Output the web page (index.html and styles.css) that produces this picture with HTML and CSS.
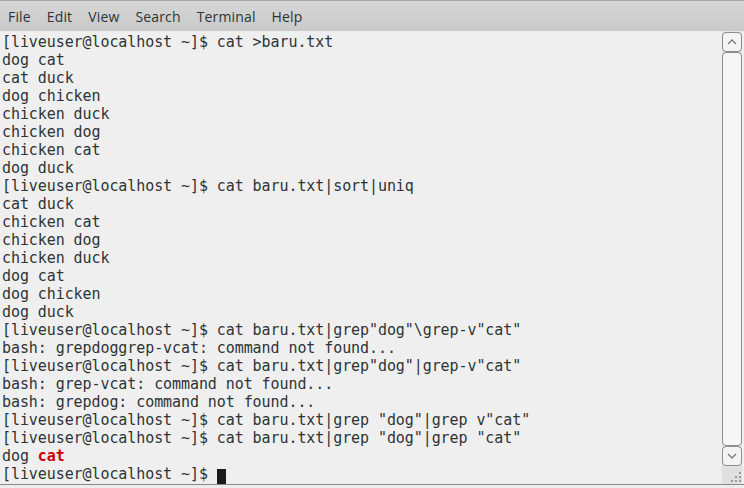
FILE: index.html
```html
<!DOCTYPE html>
<html>
<head>
<meta charset="utf-8">
<link rel="stylesheet" href="styles.css">
</head>
<body>
<div class="window">
  <div class="menubar">
    <span class="menu">File</span>
    <span class="menu">Edit</span>
    <span class="menu">View</span>
    <span class="menu">Search</span>
    <span class="menu">Terminal</span>
    <span class="menu">Help</span>
  </div>
  <div class="main">
<pre class="term">[liveuser@localhost ~]$ cat &gt;baru.txt
dog cat
cat duck
dog chicken
chicken duck
chicken dog
chicken cat
dog duck
[liveuser@localhost ~]$ cat baru.txt|sort|uniq
cat duck
chicken cat
chicken dog
chicken duck
dog cat
dog chicken
dog duck
[liveuser@localhost ~]$ cat baru.txt|grep"dog"\grep-v"cat"
bash: grepdoggrep-vcat: command not found...
[liveuser@localhost ~]$ cat baru.txt|grep"dog"|grep-v"cat"
bash: grep-vcat: command not found...
bash: grepdog: command not found...
[liveuser@localhost ~]$ cat baru.txt|grep "dog"|grep v"cat"
[liveuser@localhost ~]$ cat baru.txt|grep "dog"|grep "cat"
dog <span class="match">cat</span>
[liveuser@localhost ~]$ <span class="cursor"> </span></pre>
    <div class="scrollbar">
      <div class="sbtn">
        <svg width="12" height="8" viewBox="0 0 12 8"><path d="M2 6 L6 2 L10 6" fill="none" stroke="#7a7a7a" stroke-width="1.4"/></svg>
      </div>
      <div class="thumb"></div>
      <div class="sbtn">
        <svg width="12" height="8" viewBox="0 0 12 8"><path d="M2 2 L6 6 L10 2" fill="none" stroke="#7a7a7a" stroke-width="1.4"/></svg>
      </div>
      <div class="grip">
        <svg width="14" height="14" viewBox="0 0 14 14" fill="#9a9a9a">
          <rect x="11" y="2" width="2" height="2"/>
          <rect x="11" y="6" width="2" height="2"/>
          <rect x="7" y="6" width="2" height="2"/>
          <rect x="11" y="10" width="2" height="2"/>
          <rect x="7" y="10" width="2" height="2"/>
          <rect x="3" y="10" width="2" height="2"/>
        </svg>
      </div>
    </div>
  </div>
  <div class="bottom"></div>
</div>
</body>
</html>
```

FILE: styles.css
```css
html, body {
  margin: 0;
  padding: 0;
  background: #ededed;
}
.window {
  width: 744px;
  height: 488px;
  display: flex;
  flex-direction: column;
  overflow: hidden;
}
.menubar {
  height: 31px;
  flex: none;
  border-top: 1px solid #a8a8a8;
  background: linear-gradient(#d6d6d6, #c9c9c9);
  display: flex;
  align-items: center;
  padding-left: 8px;
  font-family: "Open Sans", "DejaVu Sans", sans-serif;
  font-size: 14px;
  color: #2e3436;
  box-sizing: border-box;
}
.menu {
  margin-right: 16px;
  letter-spacing: 0.15px;
}
.main {
  flex: 1;
  display: flex;
  background: #efefef;
  min-height: 0;
}
.term {
  flex: 1;
  margin: 0;
  padding: 2px 0 0 2px;
  font-family: "DejaVu Sans Mono", monospace;
  font-size: 15px;
  letter-spacing: -0.08px;
  line-height: 18px;
  color: #2e3436;
  white-space: pre;
  overflow: hidden;
}
.match {
  color: #cc0000;
  font-weight: bold;
}
.cursor {
  display: inline-block;
  width: 9px;
  height: 17px;
  background: #1a1a1a;
  vertical-align: -4px;
}
.scrollbar {
  width: 20px;
  flex: none;
  margin-right: 2px;
  display: flex;
  flex-direction: column;
  background: #e4e4e4;
  padding-top: 1px;
}
.sbtn {
  height: 20px;
  box-sizing: border-box;
  border: 1px solid #8d8d8d;
  border-radius: 4px;
  background: #f4f4f4;
  display: flex;
  align-items: center;
  justify-content: center;
  flex: none;
}
.thumb {
  flex: 1;
  box-sizing: border-box;
  border: 1px solid #8d8d8d;
  border-radius: 4px;
  background: #f6f6f6;
}
.grip {
  height: 18px;
  flex: none;
  display: flex;
  justify-content: flex-end;
  align-items: flex-end;
  background: #e0e0e0;
}
.bottom {
  height: 3px;
  flex: none;
  border-top: 1px solid #8a8a8a;
  background: #ededed;
}
```
